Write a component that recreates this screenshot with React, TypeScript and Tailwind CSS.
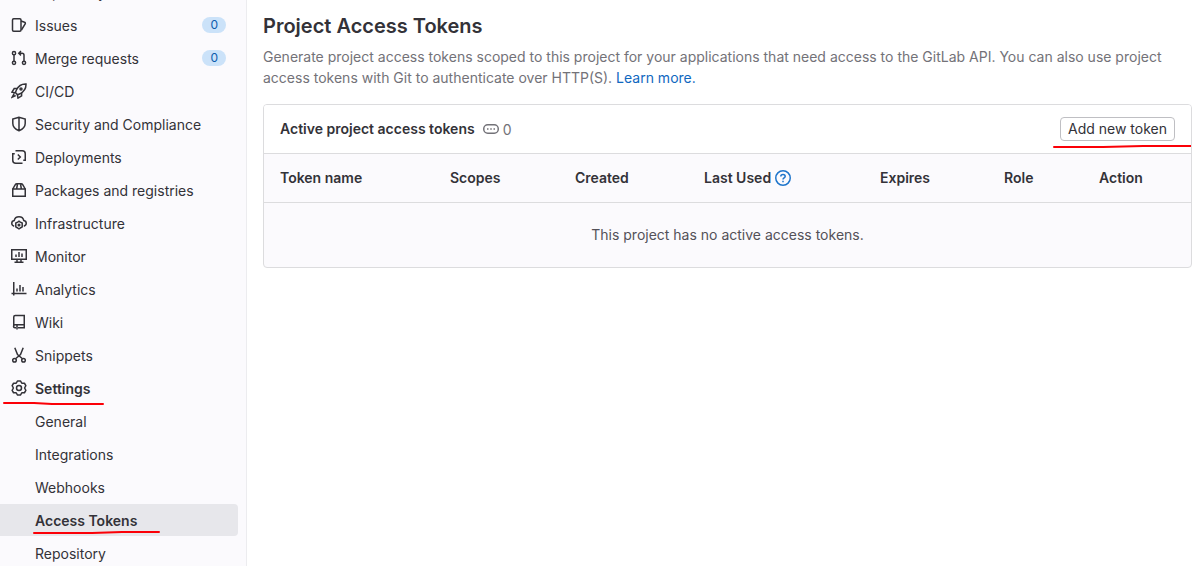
import type { ReactNode } from "react";

interface NavItem {
  label: string;
  icon: ReactNode;
  count?: number;
}

const navItems: NavItem[] = [
  {
    label: "Issues",
    count: 0,
    icon: (
      <>
        <rect x="1.5" y="1.75" width="8.5" height="12.5" rx="1.2" />
        <path d="M10 4l3.6 1.3c.6.2.9.8.7 1.4L10.4 13" />
      </>
    ),
  },
  {
    label: "Merge requests",
    count: 0,
    icon: (
      <>
        <circle cx="3" cy="3.2" r="1.6" />
        <circle cx="3" cy="12.8" r="1.6" />
        <circle cx="13" cy="12.8" r="1.6" />
        <path d="M3 4.8v6.4M13 11.2V5.2c0-1-.8-2-2-2H8M10 1L7.8 3.2 10 5.4" />
      </>
    ),
  },
  {
    label: "CI/CD",
    icon: (
      <>
        <path d="M15 1c-4.5-.2-7.5 1.6-9.6 6L4.4 9.6l2.2 2.2L9 10.8C13.400 8.500 15.200 5.500 15 1z" />
        <path d="M6 5.500H3.200L.9 9.200l3.300.6M10.600 10v2.800L7 15.100l-.6-3.200M3.200 10.500L1.300 14l3.400-1.500" />
        <circle cx="10" cy="6" r="1" />
      </>
    ),
  },
  {
    label: "Security and Compliance",
    icon: <path d="M8 1.200L1.800 3v4.500c0 3.500 2.500 5.700 6.200 7.300 3.700-1.600 6.200-3.800 6.200-7.300V3L8 1.200zM8 1.200v13.600" />,
  },
  {
    label: "Deployments",
    icon: (
      <>
        <path d="M4.500 1.750h6.750a3 3 0 0 1 3 3v6.500h-2M11.500 14.250H4.750a3 3 0 0 1-3-3v-6.500h2" />
        <path d="M6.800 5.500L9.300 8l-2.500 2.500" />
      </>
    ),
  },
  {
    label: "Packages and registries",
    icon: <path d="M1.750 7h12.500v7.250H1.750zM1.750 7l2.400-4.200c.4-.7 1-1.050 1.800-1.050h4.100c.8 0 1.400.350 1.800 1.050L14.250 7M6.400 2.500L5.700 6.500M9.600 2.500l.7 4" />,
  },
  {
    label: "Infrastructure",
    icon: (
      <>
        <path d="M3.200 11.200C1.700 10.800.75 9.700.75 8.300c0-1.500 1-2.600 2.500-2.800C3.700 3.200 5.600 1.750 8 1.750s4.300 1.450 4.750 3.750c1.500.2 2.500 1.300 2.500 2.800 0 1.400-1 2.500-2.450 2.900" />
        <path d="M8 6.200l1.300.9 1.900.9v3.900l-1.900 1.100-1.300.9-1.300-.9-1.900-1.100V8l1.900-.9z" strokeLinejoin="round" />
        <circle cx="8" cy="10" r=".8" />
      </>
    ),
  },
  {
    label: "Monitor",
    icon: <path d="M.75 1.750h14.500v9.500H.75zM6 11.500v2.800M10 11.500v2.800M3.500 14.250h9M5 6.500V9M8 4v5M11 5.500V9" />,
  },
  {
    label: "Analytics",
    icon: <path d="M2.750 1v13.500M.5 12.500h15M6 7.500v3M9 4v6.500M12 6v4.500" />,
  },
  {
    label: "Wiki",
    icon: <path d="M13.250 11V1.500h-9a1.500 1.500 0 0 0-1.500 1.500v9.250M13.250 10.750H4a1.500 1.500 0 0 0 0 3h1M7 13.750h6.250v-3M6 11.500V15.500" />,
  },
  {
    label: "Snippets",
    icon: (
      <>
        <circle cx="3.500" cy="13.200" r="1.800" />
        <circle cx="12.500" cy="13.200" r="1.800" />
        <path d="M3.800.8L6.500 7.500l5 4.200M12.200.8L9.500 7.500l-5 4.200" />
      </>
    ),
  },
  {
    label: "Settings",
    icon: (
      <>
        <path
          d="M6.600.9h2.800l1.400 2.250 2.650.1 1.400 2.400L13.600 8l1.250 2.350-1.400 2.400-2.650.1L9.400 15.100H6.600l-1.400-2.250-2.650-.1-1.400-2.400L2.400 8 1.150 5.650l1.400-2.400 2.650-.1z"
          strokeLinejoin="round"
        />
        <circle cx="8" cy="8" r="2.500" />
      </>
    ),
  },
];

const settingsItems = ["General", "Integrations", "Webhooks", "Access Tokens", "Repository"];

const columns = [
  { label: "Token name", width: "w-[170px]" },
  { label: "Scopes", width: "w-[125px]" },
  { label: "Created", width: "w-[129px]" },
  { label: "Last Used", width: "w-[176px]" },
  { label: "Expires", width: "w-[124px]" },
  { label: "Role", width: "w-[95px]" },
  { label: "Action", width: "w-[108px]" },
];

function Icon({ children }: { children: ReactNode }) {
  return (
    <svg viewBox="0 0 16 16" className="size-4 shrink-0 fill-none stroke-current stroke-[1.5]" aria-hidden="true">
      {children}
    </svg>
  );
}

// Red pen stroke drawn over the content it sits in
function Underline({ d, className }: { d: string; className: string }) {
  return (
    <svg className={`pointer-events-none absolute h-1.5 overflow-visible fill-none stroke-[#fb0007] stroke-2 ${className}`} aria-hidden="true">
      <path d={d} strokeLinecap="round" />
    </svg>
  );
}

function Sidebar() {
  return (
    <nav className="h-screen w-[247px] shrink-0 overflow-hidden border-r border-[#ececef] bg-[#fbfafd] pr-2">
      {/* The list is scrolled, so its first row is mostly out of view */}
      <ul className="-mt-6 flex flex-col gap-px">
        <li>
          <a href="#" className="flex h-8 items-center pt-0.5 pl-[35px]">Repository</a>
        </li>
        {navItems.map((item) => (
          <li key={item.label} className="relative">
            <a
              href="#"
              className={`flex h-8 items-center gap-2 pr-3 pl-[11px] ${item.label === "Settings" ? "font-semibold" : ""}`}
            >
              <Icon>{item.icon}</Icon>
              <span className="pt-0.5">{item.label}</span>
              {item.count !== undefined && (
                <span className="ml-auto rounded-full bg-[#cbe2f9] px-2 text-xs leading-4 text-[#0b5cad]">{item.count}</span>
              )}
            </a>
            {item.label === "Settings" && (
              <Underline className="top-7 left-1 w-25" d="M0 3 L30 3 L48 4 L99 4" />
            )}
          </li>
        ))}
        {settingsItems.map((label) => (
          <li key={label} className="relative">
            <a
              href="#"
              className={`flex h-8 items-center rounded-r pt-0.5 pl-[35px] ${label === "Access Tokens" ? "bg-[#e7e7eb] font-semibold" : ""}`}
            >
              {label}
            </a>
            {label === "Access Tokens" && (
              <Underline className="top-6 left-8 w-32" d="M2 5 L60 5 L90 4 L127 4" />
            )}
          </li>
        ))}
      </ul>
    </nav>
  );
}

export default function App() {
  return (
    <div className="flex bg-white font-['Inter','Liberation_Sans',sans-serif] text-sm text-[#333238]">
      <Sidebar />
      <main className="min-w-0 flex-1 pt-3 pr-3 pl-4">
        <h1 className="text-xl leading-7 font-semibold">Project Access Tokens</h1>
        <p className="mt-1.5 leading-[21px] text-[#737278]">
          Generate project access tokens scoped to this project for your applications that need access to the GitLab API.
          You can also use project access tokens with Git to authenticate over HTTP(S).{" "}
          <a href="#" className="text-[#1068bf]">Learn more.</a>
        </p>

        <section className="mt-4 overflow-hidden rounded border border-[#dcdcde] bg-[#fbfafd]">
          <header className="relative flex h-12 items-center bg-white px-4">
            <h2 className="font-semibold">Active project access tokens</h2>
            <span className="ml-2 flex items-center gap-1 text-[#737278]">
              <Icon>
                <rect x=".75" y="3.750" width="14.500" height="8.500" rx="4" />
                <path d="M4 8h1.500M7.250 8h1.500M10.500 8H12" />
              </Icon>
              <span className="pt-0.5">0</span>
            </span>
            <button type="button" className="ml-auto h-6 rounded border border-[#bfbfc3] bg-white px-[7px]">
              Add new token
            </button>
            <Underline className="right-0 bottom-0 w-[138px]" d="M1 0 L50 0 L90 -1 L138 -1" />
          </header>
          <table className="w-full table-fixed text-left">
            <thead>
              <tr className="h-[49px] border-y border-[#dcdcde]">
                {columns.map((column) => (
                  <th key={column.label} className={`px-4 font-semibold ${column.width}`}>
                    <span className="flex items-center gap-1">
                      {column.label}
                      {column.label === "Last Used" && (
                        <button type="button" aria-label="Help" className="text-[#1f75cb]">
                          <Icon>
                            <circle cx="8" cy="8" r="7.250" />
                            <path d="M5.800 6.500C5.800 5.300 6.800 4.500 8 4.500s2.200.8 2.200 1.900c0 1.400-2.200 1.500-2.200 3M8 10.700v1.500" />
                          </Icon>
                        </button>
                      )}
                    </span>
                  </th>
                ))}
              </tr>
            </thead>
            <tbody>
              <tr className="h-16">
                <td colSpan={7} className="text-center text-[#535158]">
                  This project has no active access tokens.
                </td>
              </tr>
            </tbody>
          </table>
        </section>
      </main>
    </div>
  );
}
